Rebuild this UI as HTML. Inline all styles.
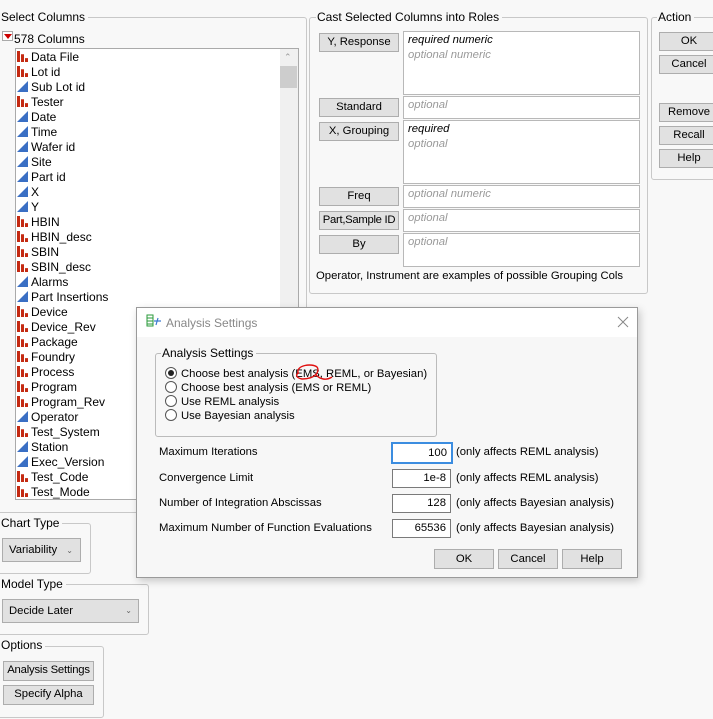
<!DOCTYPE html>
<html><head><style>
*{box-sizing:border-box;margin:0;padding:0}
body{width:713px;height:719px;overflow:hidden;background:#f8f8f8;font-family:"Liberation Sans",sans-serif;font-size:11.3px;color:#000;position:relative}
div{white-space:nowrap}
.a{position:absolute}
.grp{position:absolute;border:1px solid #c8c8c8;border-radius:3px}
.lbl{position:absolute;background:#f8f8f8;padding:0 3px 0 1px;line-height:14px;font-size:12px}
.btn{position:absolute;background:#e1e1e1;border:1px solid #adadad;text-align:center;line-height:17px}
.box{position:absolute;background:#fff;border:1px solid #b8b8b8;font-style:italic;color:#999;padding:1px 4px;line-height:15px}
.row{position:absolute;left:17px;height:15px;line-height:15px}
.n{display:inline-block;width:11px;height:11px;vertical-align:-1px;margin-right:3px;position:relative}
.n.r{background:linear-gradient(to right,#c42a12 0 3px,transparent 3px 4px,#c42a12 4px 7px,transparent 7px 8px,#c42a12 8px 11px);clip-path:polygon(0 0,3px 0,3px 30%,4px 30%,4px 30%,7px 30%,7px 65%,11px 65%,11px 100%,0 100%)}
.n.c{background:#3a6fc4;clip-path:polygon(0 100%,100% 0,100% 100%)}
.rad{display:inline-block;width:12px;height:12px;border:1px solid #555;border-radius:50%;vertical-align:-2px;margin-right:4px;background:#fff;position:relative}
.rad.on::after{content:"";position:absolute;left:2px;top:2px;width:6px;height:6px;border-radius:50%;background:#222}
.tb{position:absolute;background:#fff;border:1px solid #7a7a7a;text-align:right;padding-right:4px;line-height:17px}
</style></head><body>

<div class="grp" style="left:-3px;top:17px;width:310px;height:496px"></div>
<div class="lbl" style="left:0;top:10px">Select Columns</div>
<div class="a" style="left:2px;top:31px;width:11px;height:10px;background:#fff;border:1px solid #aaa"></div>
<div class="a" style="left:4px;top:34px;width:0;height:0;border-left:4px solid transparent;border-right:4px solid transparent;border-top:5px solid #c00"></div>
<div class="a" style="left:14px;top:32px;line-height:14px;font-size:12px">578 Columns</div>
<div class="a" style="left:15px;top:48px;width:284px;height:452px;background:#fff;border:1px solid #aaa"></div>
<div class="a" style="left:280px;top:49px;width:18px;height:450px;background:#f0f0f0"></div>
<div class="a" style="left:280px;top:66px;width:17px;height:22px;background:#cdcdcd"></div>
<div class="a" style="left:284px;top:52px;color:#999;font-size:9px">&#8963;</div>
<div id="list"></div>

<div class="grp" style="left:309px;top:17px;width:339px;height:277px"></div>
<div class="lbl" style="left:316px;top:10px">Cast Selected Columns into Roles</div>
<div class="btn" style="left:319px;top:33px;width:80px;height:19px">Y, Response</div>
<div class="box" style="left:403px;top:31px;width:237px;height:64px"><span style="color:#000">required numeric</span><br>optional numeric</div>
<div class="btn" style="left:319px;top:98px;width:80px;height:19px">Standard</div>
<div class="box" style="left:403px;top:96px;width:237px;height:23px">optional</div>
<div class="btn" style="left:319px;top:122px;width:80px;height:19px">X, Grouping</div>
<div class="box" style="left:403px;top:120px;width:237px;height:64px"><span style="color:#000">required</span><br>optional</div>
<div class="btn" style="left:319px;top:187px;width:80px;height:19px">Freq</div>
<div class="box" style="left:403px;top:185px;width:237px;height:23px">optional numeric</div>
<div class="btn" style="left:319px;top:211px;width:80px;height:19px;letter-spacing:-0.3px">Part,Sample ID</div>
<div class="box" style="left:403px;top:209px;width:237px;height:23px">optional</div>
<div class="btn" style="left:319px;top:235px;width:80px;height:19px">By</div>
<div class="box" style="left:403px;top:233px;width:237px;height:34px">optional</div>
<div class="a" style="left:316px;top:270px">Operator, Instrument are examples of possible Grouping Cols</div>

<div class="grp" style="left:651px;top:17px;width:70px;height:163px"></div>
<div class="lbl" style="left:657px;top:10px">Action</div>
<div class="btn" style="left:659px;top:32px;width:60px;height:19px">OK</div>
<div class="btn" style="left:659px;top:55px;width:60px;height:19px">Cancel</div>
<div class="btn" style="left:659px;top:103px;width:60px;height:19px">Remove</div>
<div class="btn" style="left:659px;top:126px;width:60px;height:19px">Recall</div>
<div class="btn" style="left:659px;top:149px;width:60px;height:19px">Help</div>

<div class="grp" style="left:-3px;top:523px;width:94px;height:51px"></div>
<div class="lbl" style="left:0;top:516px">Chart Type</div>
<div class="btn" style="left:2px;top:538px;width:79px;height:24px;line-height:22px;text-align:left;padding-left:6px">Variability <span style="font-size:8px;color:#666;margin-left:6px">&#8964;</span></div>
<div class="grp" style="left:-3px;top:584px;width:152px;height:51px"></div>
<div class="lbl" style="left:0;top:577px">Model Type</div>
<div class="btn" style="left:2px;top:599px;width:137px;height:24px;line-height:22px;text-align:left;padding-left:6px">Decide Later<span style="position:absolute;right:6px;font-size:8px;color:#666">&#8964;</span></div>
<div class="grp" style="left:-3px;top:646px;width:107px;height:72px"></div>
<div class="lbl" style="left:0;top:638px">Options</div>
<div class="btn" style="left:3px;top:661px;width:91px;height:20px;letter-spacing:-0.2px">Analysis Settings</div>
<div class="btn" style="left:3px;top:685px;width:91px;height:20px">Specify Alpha</div>

<div class="a" style="left:136px;top:307px;width:502px;height:271px;background:#f7f7f7;border:1px solid #9a9a9a;box-shadow:2px 3px 8px rgba(0,0,0,.2)">
 <div class="a" style="left:0;top:0;width:500px;height:29px;background:#fff"></div>
 <svg class="a" style="left:9px;top:6px" width="16" height="14"><rect x="1" y="1" width="6" height="11" fill="none" stroke="#2a9a3a"/><line x1="1" y1="4" x2="7" y2="4" stroke="#2a9a3a"/><line x1="1" y1="7" x2="7" y2="7" stroke="#2a9a3a"/><line x1="1" y1="10" x2="7" y2="10" stroke="#2a9a3a"/><path d="M8 7h7M12 4l-2 7" stroke="#3a7ad0" stroke-width="1.2"/></svg>
 <div class="a" style="left:29px;top:8px;color:#888;font-size:12px">Analysis Settings</div>
 <svg class="a" style="left:480px;top:8px" width="12" height="12"><path d="M1 1L11 11M11 1L1 11" stroke="#888" stroke-width="1"/></svg>
 <div class="grp" style="left:18px;top:45px;width:282px;height:84px;border-color:#bbb"></div>
 <div class="lbl" style="left:24px;top:38px;background:#f7f7f7">Analysis Settings</div>
 <div class="a" style="left:28px;top:59px;line-height:14px"><span class="rad on"></span>Choose best analysis (EMS, REML, or Bayesian)</div>
 <div class="a" style="left:28px;top:73px;line-height:14px"><span class="rad"></span>Choose best analysis (EMS or REML)</div>
 <div class="a" style="left:28px;top:87px;line-height:14px"><span class="rad"></span>Use REML analysis</div>
 <div class="a" style="left:28px;top:101px;line-height:14px"><span class="rad"></span>Use Bayesian analysis</div>
 <svg class="a" style="left:155px;top:53px" width="42" height="24"><path d="M6 12C4 4 20 2 25 6C28 10 24 18 10 18C4 17 3 13 7 12M24 14C28 18 34 20 40 16" fill="none" stroke="#e01010" stroke-width="1.4"/></svg>
 <div class="a" style="left:22px;top:138px">Maximum Iterations</div>
 <div class="a" style="left:22px;top:164px">Convergence Limit</div>
 <div class="a" style="left:22px;top:189px">Number of Integration Abscissas</div>
 <div class="a" style="left:22px;top:214px">Maximum Number of Function Evaluations</div>
 <div class="tb" style="left:254px;top:134px;width:62px;height:22px;border:2px solid #3c8de0;line-height:18px">100</div>
 <div class="tb" style="left:255px;top:161px;width:59px;height:19px">1e-8</div>
 <div class="tb" style="left:255px;top:186px;width:59px;height:19px">128</div>
 <div class="tb" style="left:255px;top:211px;width:59px;height:19px">65536</div>
 <div class="a" style="left:319px;top:138px">(only affects REML analysis)</div>
 <div class="a" style="left:319px;top:164px">(only affects REML analysis)</div>
 <div class="a" style="left:319px;top:189px">(only affects Bayesian analysis)</div>
 <div class="a" style="left:319px;top:214px">(only affects Bayesian analysis)</div>
 <div class="btn" style="left:297px;top:241px;width:60px;height:20px;line-height:18px">OK</div>
 <div class="btn" style="left:361px;top:241px;width:60px;height:20px;line-height:18px">Cancel</div>
 <div class="btn" style="left:425px;top:241px;width:60px;height:20px;line-height:18px">Help</div>
</div>

<script>
var items=[["Data File","r"],["Lot id","r"],["Sub Lot id","c"],["Tester","r"],["Date","c"],["Time","c"],["Wafer id","c"],["Site","c"],["Part id","c"],["X","c"],["Y","c"],["HBIN","r"],["HBIN_desc","r"],["SBIN","r"],["SBIN_desc","r"],["Alarms","c"],["Part Insertions","c"],["Device","r"],["Device_Rev","r"],["Package","r"],["Foundry","r"],["Process","r"],["Program","r"],["Program_Rev","r"],["Operator","c"],["Test_System","r"],["Station","c"],["Exec_Version","c"],["Test_Code","r"],["Test_Mode","r"]];
var h="";items.forEach(function(it,i){h+='<div class="row" style="top:'+(50+i*15)+'px;font-size:12px"><span class="n '+it[1]+'"></span>'+it[0]+'</div>';});
document.getElementById("list").innerHTML=h;
</script>
</body></html>
